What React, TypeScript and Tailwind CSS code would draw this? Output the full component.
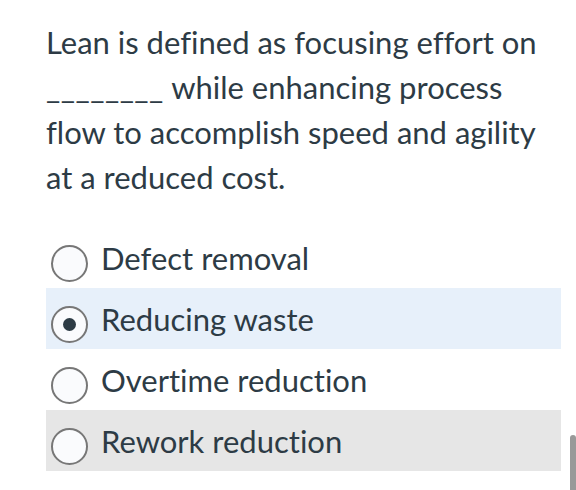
import React from "react";

const options = [
  { label: "Defect removal", bg: "", checked: false },
  { label: "Reducing waste", bg: "bg-[#e7f0fa]", checked: true },
  { label: "Overtime reduction", bg: "", checked: false },
  { label: "Rework reduction", bg: "bg-[#e6e6e6]", checked: false },
];

export default function App() {
  return (
    <div
      className="relative w-[576px] h-[490px] overflow-hidden bg-white text-[#2d3b45] [font-variant-ligatures:none]"
      style={{ fontFamily: "Lato, 'Open Sans', sans-serif" }}
    >
      <div className="pt-[20px] pl-[46px] w-[561px]">
        <p className="w-[512px] text-[31px] leading-[45px]">
          Lean is defined as focusing effort on{" "}
          <span className="tracking-[0.5px]">________</span> while enhancing process flow to accomplish speed and agility at a reduced cost.
        </p>
        <div className="mt-[27px] flex flex-col">
          {options.map((o) => (
            <div key={o.label} className={`h-[61px] flex items-start ${o.bg}`}>
              <div className="mt-[18px] ml-[5px] w-[37px] h-[37px] rounded-full border-2 border-[#777] bg-[#fafbfd] flex items-center justify-center shrink-0">
                {o.checked && <div className="w-[13px] h-[13px] rounded-full bg-[#2d3b45]" />}
              </div>
              <span className="ml-[13px] mt-[13px] text-[31px] leading-[36px] whitespace-nowrap">
                {o.label}
              </span>
            </div>
          ))}
        </div>
      </div>
      <div className="absolute right-0 top-[435px] bottom-0 w-[6px] rounded-t-full bg-[#999]" />
    </div>
  );
}
